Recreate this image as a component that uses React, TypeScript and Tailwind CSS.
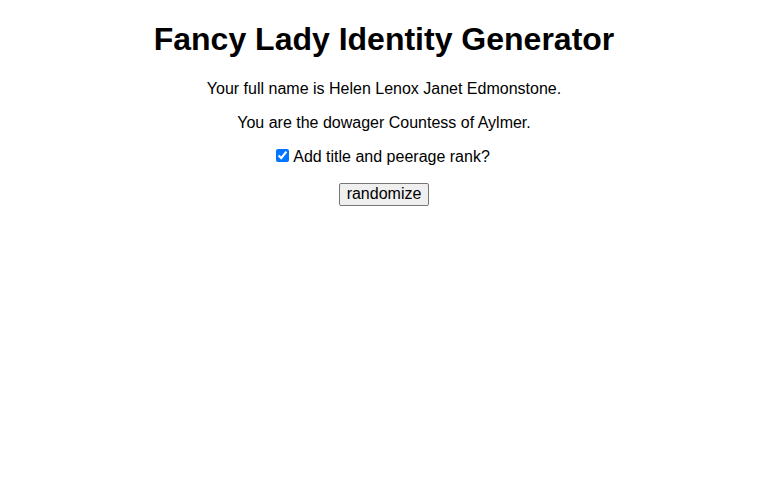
import { useState } from 'react';

const names = {
  full: 'Helen Lenox Janet Edmonstone',
  title: 'the dowager Countess of Aylmer',
};

export default function App() {
  const [withTitle, setWithTitle] = useState(true);

  return (
    <div className="min-h-[480px] bg-white text-center font-['Liberation_Sans',Arial,sans-serif] text-base text-black">
      <h1 className="pt-[21px] pb-[22px] text-[32px] leading-[37px] font-bold">Fancy Lady Identity Generator</h1>
      <p className="mb-4 leading-[18px]">Your full name is {names.full}.</p>
      {withTitle && <p className="mb-4 leading-[18px]">You are {names.title}.</p>}
      <p className="mb-4 flex h-[18px] items-start justify-center pr-[6px] leading-[18px]">
        <input
          id="peerage"
          type="checkbox"
          checked={withTitle}
          onChange={(e) => setWithTitle(e.target.checked)}
          className="mt-[1px] mr-[4px] ml-[4px] h-[13px] w-[13px] accent-[#0075ff]"
        />
        <label htmlFor="peerage">Add title and peerage rank?</label>
      </p>
      <button
        type="button"
        className="h-[23px] rounded-[2px] border border-[#767676] bg-[#efefef] px-[6.5px] leading-[18px] hover:bg-[#e5e5e5]"
      >
        randomize
      </button>
    </div>
  );
}
